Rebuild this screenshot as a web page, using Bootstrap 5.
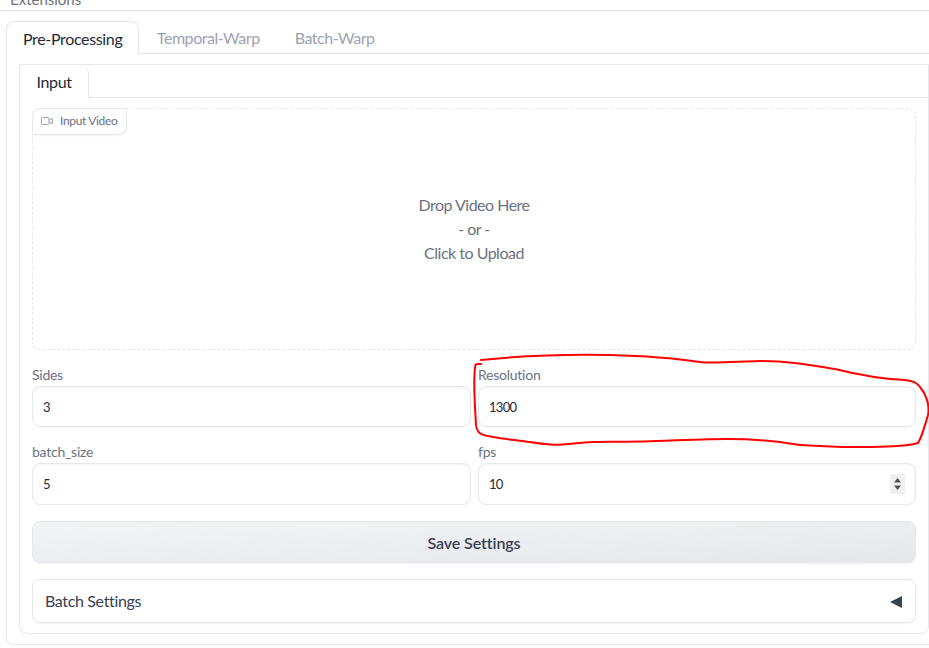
<!doctype html>
<html lang="en"><head><meta charset="utf-8"><title>Pre-Processing</title>
<link href="https://cdn.jsdelivr.net/npm/bootstrap@5.3.0/dist/css/bootstrap.min.css" rel="stylesheet">
<style>
html,body{height:648px;overflow:hidden}
body{font-family:Lato,"Noto Sans",sans-serif;background:#fff;color:#374151;position:relative;width:929px}
.ext-head{height:11px;border-bottom:1px solid #e5e7eb;overflow:hidden;display:flex;align-items:flex-end;padding-left:10px;color:#6b7280;font-size:15px;line-height:10px}
.ext-head span{transform:translateY(-6px);display:block}
.outer{margin:10px 0 0 6px;width:950px}
.tabrow{display:flex;height:33px;border-bottom:1px solid #e5e7eb;font-size:16px;letter-spacing:-.35px}
.tabbtn{line-height:34px;color:#9ca3af;white-space:nowrap;padding:0 17.5px;letter-spacing:-.45px}
.tabbtn.on{color:#1f2937;background:#fff;border:1px solid #e5e7eb;border-bottom:0;border-radius:8px 8px 0 0;height:33px;margin-bottom:-1px;padding:0 16px;position:relative;letter-spacing:-.35px}
.outer-body{border:1px solid #e5e7eb;border-top:0;border-radius:0 0 8px 8px;height:591px;padding:10px 0 10px 12px}
.inner{width:910px;border:1px solid #e5e7eb;border-radius:0 0 8px 8px;height:570px}
.inner .tabbtn.on{padding:0 16.500px;border-top:0;border-left:0;margin-top:1px;height:32px;line-height:32px}
.inner-body{padding:10px 12px 0 12px;width:908px}
.dropzone{height:242px;border:1px dashed #e5e7eb;border-radius:8px;position:relative;display:flex;flex-direction:column;align-items:center;justify-content:center;color:#6b7280;font-size:16px;line-height:24px;letter-spacing:-.5px}
.dropzone .chip{position:absolute;left:-1px;top:-1px;height:27px;display:flex;align-items:center;gap:7px;padding:0 9px 2px 8px;background:#fff;border:1px solid #e5e7eb;border-radius:8px 0 8px 0;font-size:12px;color:#6b7280;box-shadow:0 1px 2px rgba(0,0,0,.05);letter-spacing:-.35px}
.fieldgrid{display:grid;grid-template-columns:439px 438px;column-gap:7px;margin-top:15px;row-gap:15px}
.fld-label{font-size:14px;line-height:19px;color:#6b7280;margin-bottom:0;display:block;height:21px;letter-spacing:-.25px}
.fld{height:41px;border:1px solid #e5e7eb;border-radius:8px;padding:0 10px;font-size:13px;letter-spacing:-.7px;color:#1f2937;box-shadow:inset 0 1px 2px rgba(0,0,0,.05);font-family:inherit;width:100%}
.fld.tall{height:42px}
.fld:focus{border-color:#e5e7eb;box-shadow:inset 0 1px 2px rgba(0,0,0,.05)}
input[type=number]::-webkit-inner-spin-button{display:none}
.spin{position:absolute;left:412px;top:11px;pointer-events:none}
.savebtn{display:block;width:100%;height:42px;margin-top:16px;border:1px solid #e5e7eb;border-radius:8px;background:linear-gradient(to bottom right,#f3f4f6,#e5e7eb);font-weight:600;font-size:16px;color:#374151;box-shadow:0 1px 2px rgba(0,0,0,.05);padding:1px 0 0;letter-spacing:-.1px}
.accord{margin-top:16px;height:44px;border:1px solid #e5e7eb;border-radius:8px;display:flex;align-items:center;justify-content:space-between;padding:0 13px 0 12px;font-size:16px;box-shadow:0 1px 2px rgba(0,0,0,.05);color:#374151;letter-spacing:-.35px}
.arrow{width:0;height:0;border-top:6px solid transparent;border-bottom:6px solid transparent;border-right:12px solid #374151;margin-top:1px}
.redline{position:absolute;left:0;top:0;pointer-events:none}
</style></head>
<body>
<div class="ext-head"><span>Extensions</span></div>
<div class="outer">
  <div class="tabrow"><div class="tabbtn on">Pre-Processing</div><div class="tabbtn">Temporal-Warp</div><div class="tabbtn">Batch-Warp</div></div>
  <div class="outer-body">
    <div class="inner">
      <div class="tabrow"><div class="tabbtn on">Input</div></div>
      <div class="inner-body">
        <div class="dropzone">
          <div class="chip"><svg width="12" height="10" viewBox="0 0 12 10" fill="none" stroke="#9ca3af" stroke-width="1"><rect x=".5" y="1.500" width="7.500" height="7" rx=".8"/><path d="M8 4.200 11.300 2.400V7.600L8 5.800"/></svg>Input Video</div>
          <div>Drop Video Here</div><div>- or -</div><div>Click to Upload</div>
        </div>
        <div class="fieldgrid">
          <div><label class="fld-label" for="f1">Sides</label><input id="f1" class="form-control fld" value="3"></div>
          <div><label class="fld-label" for="f2">Resolution</label><input id="f2" class="form-control fld" value="1300"></div>
          <div><label class="fld-label" for="f3">batch_size</label><input id="f3" class="form-control fld tall" value="5"></div>
          <div><label class="fld-label" for="f4">fps</label><div class="position-relative"><input id="f4" type="number" class="form-control fld tall" value="10"><svg class="spin" width="15" height="20" viewBox="0 0 15 20"><rect width="15" height="20" fill="#f0f0f0"/><path d="M7.500 4 11 8.500H4z M7.500 16 11 11.500H4z" fill="#505050"/></svg></div></div>
        </div>
        <button class="btn savebtn" type="button">Save Settings</button>
        <div class="accord"><span>Batch Settings</span><span class="arrow"></span></div>
      </div>
    </div>
  </div>
</div>
<svg class="redline" width="929" height="648" viewBox="0 0 929 648" fill="none" stroke="#ff0000" stroke-width="2" stroke-linecap="round" stroke-linejoin="round">
<path d="M481 360C510 357 560 354 610 355C650 356 680 359 700 362C710 363.500 730 362 760 361C790 361 810 365 835 369C855 374 880 379 905 380C914 381 917 383 920 387C926 394 930 405 928 415C925 425 922 437 918 443C905 447 875 447 843 447C825 446 805 446 793 444C775 441 750 439 727 439C700 439 660 441 640 441.500C620 442 600 441.500 593 442C575 443 565 445 553 444.700C540 444 535 443 527 441.700C515 440 505 439 493 437C480 435 477 433 476 425C475 405 473 385 475 368C475 363 477 364 481 364"/>
</svg>
</body></html>
